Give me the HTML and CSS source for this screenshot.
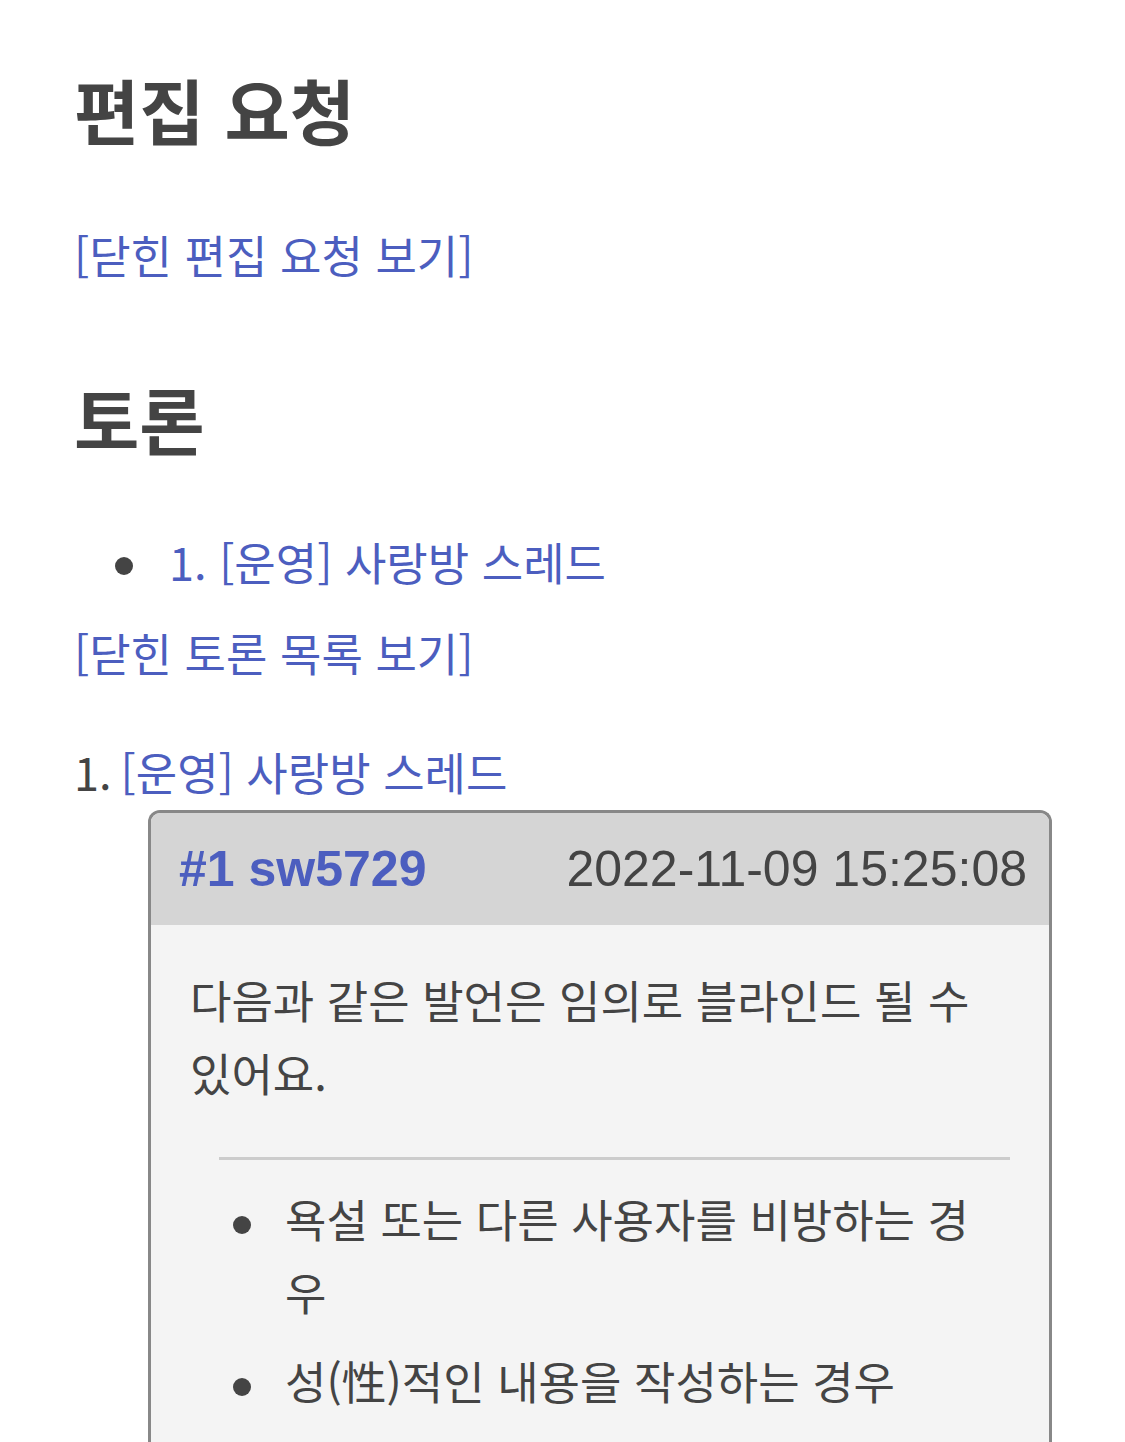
FILE: index.html
```html
<!DOCTYPE html>
<html lang="ko">
<head>
<meta charset="utf-8">
<title>편집 요청 / 토론</title>
<link rel="stylesheet" href="styles.css">
</head>
<body>
<main class="page">
  <h2 class="section-title">편집 요청</h2>
  <p class="line first-link"><a class="link" href="#">[닫힌 편집 요청 보기]</a></p>

  <h2 class="section-title discuss-title">토론</h2>
  <ul class="thread-list">
    <li class="thread-item"><a class="link" href="#">1. [운영] 사랑방 스레드</a></li>
  </ul>
  <p class="line closed-link"><a class="link" href="#">[닫힌 토론 목록 보기]</a></p>

  <div class="thread-title"><span class="num">1.</span><a class="link" href="#">[운영] 사랑방 스레드</a></div>

  <section class="comment">
    <header class="comment-head">
      <a class="author" href="#">#1 sw5729</a>
      <span class="date">2022-11-09 15:25:08</span>
    </header>
    <div class="comment-body">
      <p class="para">다음과 같은 발언은 임의로 블라인드 될 수 있어요.</p>
      <hr class="divider">
      <ul class="rules">
        <li class="rule">욕설 또는 다른 사용자를 비방하는 경우</li>
        <li class="rule">성(性)적인 내용을 작성하는 경우</li>
      </ul>
    </div>
  </section>
</main>
</body>
</html>
```
FILE: styles.css
```css
html, body {
  margin: 0;
  padding: 0;
  background: #ffffff;
}

body {
  font-family: "Noto Sans CJK KR", "Noto Sans", sans-serif;
  font-size: 45px;
  line-height: 73px;
  color: #444444;
}

.page {
  padding: 60px 73px 0 74px;
}

.section-title {
  margin: 0;
  font-size: 71px;
  line-height: 96px;
  font-weight: 700;
  color: #444444;
}

.discuss-title {
  margin-top: 78px;
}

.line {
  margin: 0;
}

.first-link {
  margin-top: 62px;
}

.link {
  color: #4c5ebf;
  text-decoration: none;
}

.thread-list {
  list-style: none;
  margin: 60px 0 0 0;
  padding: 0 0 0 41px;
}

.thread-item {
  display: grid;
  grid-template-columns: 54px 1fr;
}

.thread-item::before,
.rule::before {
  content: "";
  width: 18px;
  height: 18px;
  border-radius: 50%;
  background: #444444;
  margin-top: 32px;
  justify-self: start;
}

.closed-link {
  margin-top: 18px;
}

.thread-title {
  margin-top: 46px;
}

.num {
  color: #444444;
  margin-right: 9px;
}

.comment {
  margin: 2px 0 0 74px;
  border: 3px solid #888888;
  border-bottom: none;
  border-radius: 12px 12px 0 0;
  background: #f4f4f4;
  overflow: hidden;
  min-height: 640px;
}

.comment-head {
  height: 112px;
  background: #d5d5d5;
  display: flex;
  align-items: center;
  justify-content: space-between;
  padding: 0 22px 0 28px;
  font-family: "Liberation Sans", Arial, sans-serif;
}

.author {
  color: #4c5ebf;
  font-weight: 700;
  font-size: 50px;
  text-decoration: none;
}

.date {
  color: #444444;
  font-size: 50px;
}

.comment-body {
  padding: 38px 39px 0 39px;
}

.para {
  margin: 0;
}

.divider {
  margin: 48px 0 0 29px;
  border: none;
  height: 3px;
  background: #cccccc;
}

.rules {
  list-style: none;
  margin: 22px 20px 0 0;
  padding: 0 0 0 43px;
}

.rule {
  display: grid;
  grid-template-columns: 52px 1fr;
}

.rule + .rule {
  margin-top: 16px;
}

.rule::before {
  margin-top: 34px;
}
```
